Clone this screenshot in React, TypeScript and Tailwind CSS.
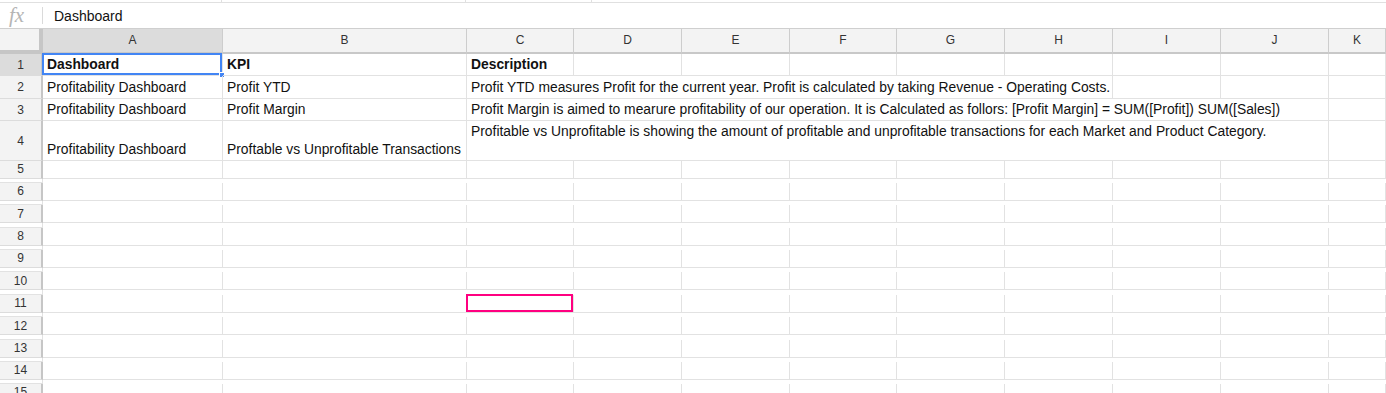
import React from 'react';

const COLS = ['A', 'B', 'C', 'D', 'E', 'F', 'G', 'H', 'I', 'J', 'K'];
const GRID = 'grid grid-cols-[43px_180px_244px_107px_108px_108px_107px_108px_108px_108px_108px_1fr]';

type Row = {
  n: number;
  h: string;
  a?: string;
  b?: string;
  c?: string;
  span?: number; // columns the C text runs across
  bold?: boolean;
  tall?: boolean;
};

const ROWS: Row[] = [
  { n: 1, h: 'h-[22px]', a: 'Dashboard', b: 'KPI', c: 'Description', span: 1, bold: true },
  {
    n: 2,
    h: 'h-[23px]',
    a: 'Profitability Dashboard',
    b: 'Profit YTD',
    c: 'Profit YTD measures Profit for the current year. Profit is calculated by taking Revenue - Operating Costs.',
    span: 6,
  },
  {
    n: 3,
    h: 'h-[22px]',
    a: 'Profitability Dashboard',
    b: 'Profit Margin',
    c: 'Profit Margin is aimed to mearure profitability of our operation. It is Calculated as follors: [Profit Margin] = SUM([Profit]) SUM([Sales])',
    span: 8,
  },
  {
    n: 4,
    h: 'h-[40px]',
    tall: true,
    a: 'Profitability Dashboard',
    b: 'Proftable vs Unprofitable Transactions',
    c: 'Profitable vs Unprofitable is showing the amount of profitable and unprofitable transactions for each Market and Product Category.',
    span: 8,
  },
  { n: 5, h: 'h-[22px]' },
  { n: 6, h: 'h-[22px]' },
  { n: 7, h: 'h-[23px]' },
  { n: 8, h: 'h-[22px]' },
  { n: 9, h: 'h-[22px]' },
  { n: 10, h: 'h-[23px]' },
  { n: 11, h: 'h-[22px]' },
  { n: 12, h: 'h-[23px]' },
  { n: 13, h: 'h-[22px]' },
  { n: 14, h: 'h-[22px]' },
  { n: 15, h: 'h-[22px]' },
];

const spanClass: Record<number, string> = {
  1: 'col-span-1',
  6: 'col-span-6',
  8: 'col-span-8',
};

function Cell({ children, className = '' }: { children?: React.ReactNode; className?: string }) {
  return (
    <div className={`relative flex min-w-0 items-end whitespace-nowrap border-r border-b border-[#e2e2e2] px-[4px] pb-[3px] ${className}`}>
      {children}
    </div>
  );
}

export default function App() {
  return (
    <div className="h-[393px] w-full overflow-hidden bg-white font-['Liberation_Sans',Arial,sans-serif] text-[13.85px] leading-[16px] text-[#111]">
      {/* bit of the toolbar above */}
      <div className="flex h-[3px] border-b border-[#e0e0e0]">
        <div className="w-[222px] border-r border-[#e0e0e0]" />
        <div className="w-[244px] border-r border-[#e0e0e0]" />
        <div className="w-[126px] border-r border-[#e0e0e0]" />
      </div>

      {/* formula bar */}
      <div className="flex h-[26px] items-center border-b border-[#cfcfcf]">
        <div className="flex w-[42px] items-center pl-[9px] font-['Liberation_Serif',serif] text-[21px] italic leading-none text-[#b5b5b5]">
          fx
        </div>
        <div className="h-[17px] w-px bg-[#dadada]" />
        <div className="pl-[11px] text-[14px]">Dashboard</div>
      </div>

      {/* column headers */}
      <div className={`${GRID} h-[25px] text-[12px] text-[#333]`}>
        <div className="border-r-4 border-b-4 border-[#c6c6c6] bg-[#f3f3f3]" />
        {COLS.map((c, i) => (
          <div
            key={c}
            className={`flex items-center justify-center border-r border-b-2 border-r-[#cdcdcd] border-b-[#c8c8c8] pb-[1px] ${
              i === 0 ? 'bg-[#dcdcdc]' : 'bg-[#f3f3f3]'
            }`}
          >
            {c}
          </div>
        ))}
      </div>

      {/* rows */}
      {ROWS.map((r) => {
        const used = r.c ? 2 + (r.span ?? 1) : 2;
        const rest = 11 - used;
        return (
          <div key={r.n} className={`${GRID} ${r.h} ${r.bold ? 'font-bold' : ''}`}>
            <div
              className={`flex items-center justify-center border-r-2 border-b border-r-[#c6c6c6] border-b-[#dcdcdc] text-[12px] font-normal text-[#333] ${
                r.n === 1 ? 'bg-[#dcdcdc]' : 'bg-[#f3f3f3]'
              }`}
            >
              {r.n}
            </div>
            <Cell>
              {r.a}
              {r.n === 1 && (
                <>
                  <div className="pointer-events-none absolute -top-px -left-px right-0 bottom-0 border-2 border-[#4285f4]" />
                  <div className="absolute -right-[3px] -bottom-[3px] h-[6px] w-[6px] border border-white bg-[#4285f4]" />
                </>
              )}
            </Cell>
            <Cell>{r.b}</Cell>
            {r.c ? (
              <Cell className={`${spanClass[r.span ?? 1]} ${r.tall ? 'items-start pt-[2px]' : ''}`}>{r.c}</Cell>
            ) : (
              <Cell>
                {r.n === 11 && (
                  <div className="pointer-events-none absolute -top-px -left-px right-0 bottom-0 border-2 border-[#ff0080]" />
                )}
              </Cell>
            )}
            {Array.from({ length: rest }).map((_, i) => (
              <Cell key={i} />
            ))}
          </div>
        );
      })}
    </div>
  );
}
